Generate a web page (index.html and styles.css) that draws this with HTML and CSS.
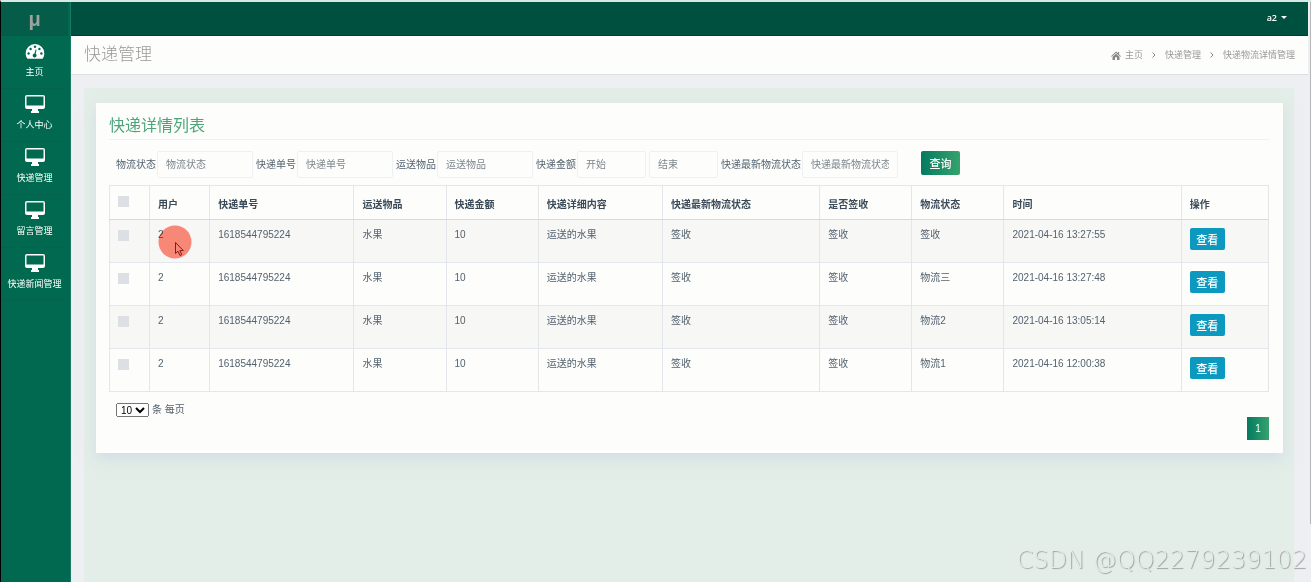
FILE: index.html
```
<!DOCTYPE html>
<html lang="zh-CN">
<head>
  <meta charset="UTF-8">
  <meta name="viewport" content="width=device-width, initial-scale=1.0">
  <title>快递管理</title>
  <link rel="stylesheet" href="styles.css">
</head>
<body>

<!-- Shared icons -->
<svg class="sprite" aria-hidden="true">
  <symbol id="icon-monitor" viewBox="0 0 20 18">
    <path fill-rule="evenodd" d="M2 0h16q2 0 2 2v10q0 2-2 2h-5v2h1v2H6v-2h1v-2H2q-2 0-2-2V2Q0 0 2 0zM1.500 1.500v9h17v-9z"/>
  </symbol>
</svg>

<!-- Sidebar -->
<nav class="sidebar">
  <a class="logo" href="#">μ</a>
  <a class="nav-item" href="#">
    <svg class="nav-icon" viewBox="0 0 20 18">
      <path d="M10 2a9.300 9.300 0 0 0-9.300 9.300c0 2 .5 3.600 1.400 5q.4.500 1 .500h13.800q.6 0 1-.500c.9-1.400 1.400-3 1.400-5A9.300 9.300 0 0 0 10 2z"/>
      <g class="dial">
        <circle cx="3.600" cy="11.500" r="1.200"/>
        <circle cx="5.600" cy="7" r="1.200"/>
        <circle cx="10" cy="4.800" r="1.200"/>
        <circle cx="14.400" cy="7" r="1.200"/>
        <circle cx="16.400" cy="11.500" r="1.200"/>
        <path d="M10.600 7.500l1 .300-.900 4a2 2 0 1 1-1.200-.300z"/>
      </g>
    </svg>
    <span>主页</span>
  </a>
  <a class="nav-item" href="#">
    <svg class="nav-icon"><use href="#icon-monitor"/></svg>
    <span>个人中心</span>
  </a>
  <a class="nav-item" href="#">
    <svg class="nav-icon"><use href="#icon-monitor"/></svg>
    <span>快递管理</span>
  </a>
  <a class="nav-item" href="#">
    <svg class="nav-icon"><use href="#icon-monitor"/></svg>
    <span>留言管理</span>
  </a>
  <a class="nav-item" href="#">
    <svg class="nav-icon"><use href="#icon-monitor"/></svg>
    <span>快递新闻管理</span>
  </a>
</nav>

<div class="page">
  <header class="topbar">
    <button class="user-menu" type="button">a2 <span class="caret"></span></button>
  </header>

  <div class="title-bar">
    <h1>快递管理</h1>
    <div class="breadcrumb">
      <svg class="home-icon" viewBox="0 0 10 9"><path d="M5 .500l1.800 1.700V1h1.300v2.400L10 5.200l-.600.600L5 1.900.6 5.800 0 5.200z"/><path d="M5 2.700l3.500 3.100V9H6V6.300H4V9H1.500V5.800z"/></svg>
      <a href="#">主页</a>
      <svg class="arrow" viewBox="0 0 4 6"><path d="M.5.500L3 3 .5 5.500"/></svg>
      <a href="#">快递管理</a>
      <svg class="arrow" viewBox="0 0 4 6"><path d="M.5.500L3 3 .5 5.500"/></svg>
      <span>快递物流详情管理</span>
    </div>
  </div>

  <main class="content">
    <section class="panel">
      <h2>快递详情列表</h2>

      <!-- Search form -->
      <form class="search" onsubmit="return false">
        <div class="field">
          <label for="status">物流状态</label>
          <input type="text" id="status" placeholder="物流状态">
        </div>
        <div class="field">
          <label for="number">快递单号</label>
          <input type="text" id="number" placeholder="快递单号">
        </div>
        <div class="field">
          <label for="goods">运送物品</label>
          <input type="text" id="goods" placeholder="运送物品">
        </div>
        <div class="field">
          <label for="priceStart">快递金额</label>
          <input type="text" id="priceStart" class="short" placeholder="开始">
        </div>
        <div class="field">
          <input type="text" id="priceEnd" class="short" placeholder="结束" aria-label="结束">
        </div>
        <div class="field">
          <label for="latest">快递最新物流状态</label>
          <input type="text" id="latest" placeholder="快递最新物流状态">
        </div>
        <button class="search-button" type="submit">查询</button>
      </form>

      <!-- Results -->
      <table class="list">
        <colgroup>
          <col class="col-check">
          <col class="col-user">
          <col class="col-number">
          <col class="col-normal">
          <col class="col-normal">
          <col class="col-detail">
          <col class="col-latest">
          <col class="col-normal">
          <col class="col-normal">
          <col class="col-time">
          <col class="col-action">
        </colgroup>
        <thead>
          <tr>
            <th class="check"><input type="checkbox" aria-label="全选"></th>
            <th>用户</th>
            <th>快递单号</th>
            <th>运送物品</th>
            <th>快递金额</th>
            <th>快递详细内容</th>
            <th>快递最新物流状态</th>
            <th>是否签收</th>
            <th>物流状态</th>
            <th>时间</th>
            <th>操作</th>
          </tr>
        </thead>
        <tbody>
          <tr>
            <td class="check"><input type="checkbox" aria-label="选择"></td>
            <td>2</td>
            <td>1618544795224</td>
            <td>水果</td>
            <td>10</td>
            <td>运送的水果</td>
            <td>签收</td>
            <td>签收</td>
            <td>签收</td>
            <td>2021-04-16 13:27:55</td>
            <td><button class="view-button" type="button">查看</button></td>
          </tr>
          <tr>
            <td class="check"><input type="checkbox" aria-label="选择"></td>
            <td>2</td>
            <td>1618544795224</td>
            <td>水果</td>
            <td>10</td>
            <td>运送的水果</td>
            <td>签收</td>
            <td>签收</td>
            <td>物流三</td>
            <td>2021-04-16 13:27:48</td>
            <td><button class="view-button" type="button">查看</button></td>
          </tr>
          <tr>
            <td class="check"><input type="checkbox" aria-label="选择"></td>
            <td>2</td>
            <td>1618544795224</td>
            <td>水果</td>
            <td>10</td>
            <td>运送的水果</td>
            <td>签收</td>
            <td>签收</td>
            <td>物流2</td>
            <td>2021-04-16 13:05:14</td>
            <td><button class="view-button" type="button">查看</button></td>
          </tr>
          <tr>
            <td class="check"><input type="checkbox" aria-label="选择"></td>
            <td>2</td>
            <td>1618544795224</td>
            <td>水果</td>
            <td>10</td>
            <td>运送的水果</td>
            <td>签收</td>
            <td>签收</td>
            <td>物流1</td>
            <td>2021-04-16 12:00:38</td>
            <td><button class="view-button" type="button">查看</button></td>
          </tr>
        </tbody>
      </table>

      <div class="page-size">
        <select id="pageSize">
          <option>10</option>
          <option>25</option>
          <option>50</option>
        </select>
        <label for="pageSize">条 每页</label>
      </div>

      <div class="pagination">
        <button type="button">1</button>
      </div>
    </section>
  </main>
</div>

<div class="scroll-track"></div>

<!-- Pointer highlight -->
<svg class="pointer" viewBox="0 0 34 34">
  <circle cx="17" cy="17" r="16.500"/>
  <path d="M17.500 17.500v11l2.500-2.300 2 4.300 1.800-.900-2-4h3.500z"/>
</svg>

<div class="watermark">CSDN @QQ2279239102</div>

</body>
</html>
```

FILE: styles.css
```
* {
  box-sizing: border-box;
}

body {
  display: flex;
  position: relative;
  height: 100vh;
  margin: 0;
  overflow: hidden;
  border-top: 2px solid #d9eae6;
  border-left: 1px solid #000;
  background-color: #eeeff3;
  color: #54626f;
  font-family: "Liberation Sans", "Noto Sans CJK SC", sans-serif;
  font-size: 10px;
  line-height: 14px;
}

a {
  color: inherit;
  text-decoration: none;
}

button,
input,
select {
  font-family: inherit;
  font-size: 10px;
}

button {
  padding: 0;
  border: none;
  color: #fff;
  cursor: pointer;
}

.sprite {
  position: absolute;
  width: 0;
  height: 0;
}

/* Sidebar */
.sidebar {
  flex: none;
  width: 70px;
  padding-right: 2px;
  background-color: #00694f;
  border-right: 1px solid #1b7a63;
}

.logo {
  display: block;
  height: 34px;
  background-color: #055d49;
  color: #9aa39f;
  font-size: 20px;
  font-weight: bold;
  line-height: 34px;
  text-align: center;
}

.nav-item {
  display: flex;
  flex-direction: column;
  align-items: center;
  gap: 5px;
  height: 53px;
  padding-top: 6px;
  border-bottom: 1px solid #04634c;
  color: #fff;
  font-size: 9px;
  white-space: nowrap;
}

.nav-icon {
  width: 20px;
  height: 18px;
  fill: #fff;
}

.dial {
  fill: #00694f;
}

/* Top */
.page {
  display: flex;
  flex: 1;
  flex-direction: column;
  min-width: 0;
}

.topbar {
  display: flex;
  flex: none;
  align-items: center;
  justify-content: flex-end;
  height: 34px;
  padding-right: 21px;
  padding-bottom: 2px;
  border-bottom: 1px solid #003d30;
  background-color: #00503f;
}

.user-menu {
  display: flex;
  align-items: center;
  gap: 4px;
  background: none;
  font-family: "Open Sans", "Noto Sans CJK SC", sans-serif;
  font-size: 9px;
  font-weight: 600;
}

.caret {
  border-top: 3px solid #fff;
  border-right: 3px solid transparent;
  border-left: 3px solid transparent;
}

.title-bar {
  display: flex;
  flex: none;
  align-items: center;
  justify-content: space-between;
  height: 39px;
  padding: 0 13px;
  border-bottom: 1px solid #dddee1;
  background-color: #fdfefc;
}

h1 {
  margin: 0;
  color: #999;
  font-size: 17px;
  font-weight: 300;
  line-height: 24px;
}

.breadcrumb {
  display: flex;
  align-items: center;
  color: #999;
  font-size: 9px;
}

.home-icon {
  width: 10px;
  height: 9px;
  margin-right: 4px;
  fill: #888;
}

.arrow {
  width: 4px;
  height: 6px;
  margin: 0 9px;
  fill: none;
  stroke: #888;
}

/* Content */
.content {
  flex: 1;
  margin: 13px 14px 0 13px;
  padding: 15px 11px 0 12px;
  background-color: #e4eee8;
}

.panel {
  padding: 13px 14px 13px 13px;
  background-color: #fdfefc;
  box-shadow: 0 6px 14px rgba(190, 205, 230, 0.5);
}

h2 {
  margin: 0 0 11px;
  padding-bottom: 3px;
  border-bottom: 1px solid #eff0ef;
  color: #4ba578;
  font-size: 16px;
  font-weight: normal;
  line-height: 20px;
}

.search {
  display: flex;
  align-items: center;
  gap: 3px;
  margin-bottom: 7px;
  padding-left: 7px;
}

.field {
  display: flex;
  align-items: center;
  gap: 1px;
}

.field label {
  white-space: nowrap;
}

.field input {
  width: 96px;
  height: 27px;
  padding: 0 8px;
  border: 1px solid #eef1f4;
  border-radius: 2px;
  background-color: #fdfefc;
  color: #54626f;
}

.field .short {
  width: 69px;
}

.field input::placeholder {
  color: #7d858c;
}

.search-button {
  width: 39px;
  height: 24px;
  margin: 0 0 3px 20px;
  border-radius: 2px;
  background: linear-gradient(to right, #047a60, #36a26d);
  font-size: 11px;
  font-weight: 500;
}

/* Table */
.list {
  width: 100%;
  border-collapse: collapse;
  table-layout: fixed;
}

.col-check {
  width: 40px;
}

.col-user {
  width: 60px;
}

.col-number {
  width: 144px;
}

.col-normal {
  width: 92px;
}

.col-detail {
  width: 124px;
}

.col-latest {
  width: 157px;
}

.col-time {
  width: 177px;
}

.col-action {
  width: 87px;
}

.list th,
.list td {
  padding: 8px;
  border: 1px solid #e3e6ea;
  text-align: left;
  vertical-align: top;
}

.list th {
  height: 34px;
  padding-top: 12px;
  padding-bottom: 7px;
  border-bottom: 1px solid #d6dade;
  color: #3b4a58;
}

.list td {
  height: 43px;
  padding-bottom: 4px;
}

.list tbody tr:nth-child(odd) {
  background-color: #f7f7f6;
}

.list .check {
  padding-top: 10px;
  line-height: 0;
}

.check input {
  appearance: none;
  width: 11px;
  height: 11px;
  margin: 0;
  background-color: #dce0e4;
}

.view-button {
  display: block;
  width: 35px;
  height: 22px;
  border-radius: 2px;
  background-color: #0b99c0;
  font-size: 11px;
  font-weight: 500;
}

/* Table footer */
.page-size {
  display: flex;
  align-items: center;
  gap: 3px;
  margin-top: 11px;
  padding-left: 7px;
}

.page-size select {
  width: 33px;
  height: 14px;
  padding: 0;
}

.pagination {
  display: flex;
  justify-content: flex-end;
}

.pagination button {
  width: 22px;
  height: 23px;
  background: linear-gradient(to right, #047a60, #36a26d);
}

.scroll-track {
  flex: none;
  width: 3px;
  height: 90%;
  border-right: 1px solid #b5b5b8;
}

/* Overlays */
.pointer {
  position: absolute;
  top: 223px;
  left: 157px;
  width: 34px;
  height: 34px;
  pointer-events: none;
  mix-blend-mode: multiply;
}

.pointer circle {
  fill: #ff8c7c;
}

.pointer path {
  fill: #ff8c7c;
  stroke: #8c1a14;
}

.watermark {
  position: absolute;
  right: 4px;
  bottom: 8px;
  color: #e6ebe9;
  font-family: "DejaVu Sans", sans-serif;
  font-size: 24px;
  font-weight: 200;
  line-height: 28px;
  text-shadow: 1px 1px 1px #999f9d;
  pointer-events: none;
}
```
